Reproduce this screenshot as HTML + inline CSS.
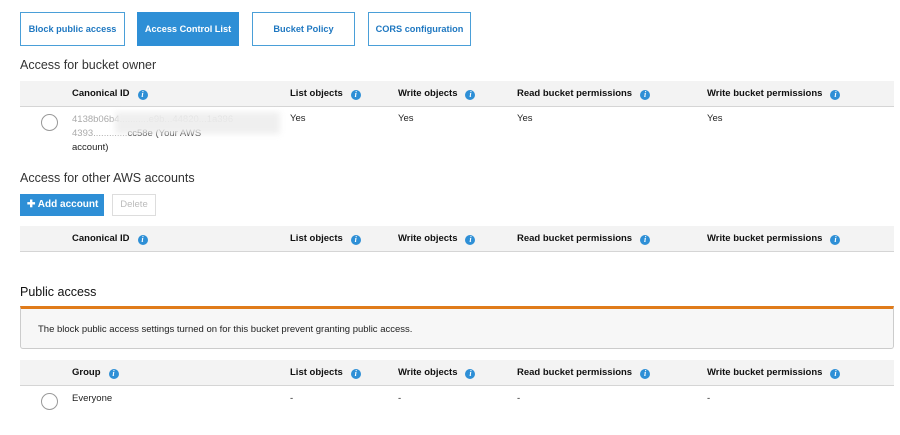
<!DOCTYPE html><html><head><style>
*{box-sizing:border-box;margin:0;padding:0}
body{width:900px;height:435px;background:#fff;font-family:"Liberation Sans",Arial,sans-serif;color:#222;position:relative;overflow:hidden}
.a{position:absolute}
.tab{position:absolute;top:12px;height:34px;border:1px solid #4a9fd8;color:#1f78c1;font-size:9.2px;font-weight:bold;display:flex;align-items:center;justify-content:center;background:#fff}
.tab.on{background:#2e8fd6;color:#fff;border-color:#2e8fd6}
h2{position:absolute;font-size:12.5px;font-weight:normal;color:#333;left:20px}
.hd{position:absolute;left:20px;width:874px;height:26px;background:#f3f3f3;border-bottom:1px solid #d5d5d5}
.hd span{position:absolute;top:7px;font-size:9.5px;font-weight:bold;color:#111;white-space:nowrap}
.i{display:inline-block;width:10px;height:10px;border-radius:50%;background:#2e8fd6;color:#fff;font-size:8px;line-height:10px;text-align:center;margin-left:8px;vertical-align:-1px;font-family:"Liberation Serif",serif;font-weight:bold}
.t{position:absolute;font-size:9.5px;color:#222}
.r{position:absolute;left:41px;width:17px;height:17px;border:1px solid #999;border-radius:50%}
</style></head><body>
<div class="tab" style="left:20px;width:105px">Block public access</div>
<div class="tab on" style="left:137px;width:102px">Access Control List</div>
<div class="tab" style="left:252px;width:103px">Bucket Policy</div>
<div class="tab" style="left:368px;width:103px">CORS configuration</div>

<h2 style="top:58px">Access for bucket owner</h2>
<div class="hd" style="top:81px"><span style="left:52px">Canonical ID<i class="i">i</i></span><span style="left:270px">List objects<i class="i">i</i></span><span style="left:378px">Write objects<i class="i">i</i></span><span style="left:497px">Read bucket permissions<i class="i">i</i></span><span style="left:687px">Write bucket permissions<i class="i">i</i></span></div>
<div class="r" style="top:114px"></div>
<div class="t" style="left:72px;top:113px;line-height:14px;width:210px"><span style="color:#aaa">4138b06b4...........e9b...44820...1a396</span><br><span style="color:#aaa">4393.............</span>cc58e (Your AWS<br>account)</div>
<div class="a" style="left:115px;top:112px;width:165px;height:22px;background:#eee;filter:blur(3px);opacity:.9"></div>
<div class="t" style="left:290px;top:113px">Yes</div>
<div class="t" style="left:398px;top:113px">Yes</div>
<div class="t" style="left:517px;top:113px">Yes</div>
<div class="t" style="left:707px;top:113px">Yes</div>

<h2 style="top:171px">Access for other AWS accounts</h2>
<div class="a" style="left:20px;top:194px;width:84px;height:22px;background:#2e8fd6;color:#fff;font-size:10px;font-weight:bold;line-height:22px;padding-left:7px">✚ Add account</div>
<div class="a" style="left:112px;top:194px;width:44px;height:22px;border:1px solid #ddd;color:#bbb;font-size:9.5px;line-height:20px;text-align:center">Delete</div>
<div class="hd" style="top:226px"><span style="left:52px">Canonical ID<i class="i">i</i></span><span style="left:270px">List objects<i class="i">i</i></span><span style="left:378px">Write objects<i class="i">i</i></span><span style="left:497px">Read bucket permissions<i class="i">i</i></span><span style="left:687px">Write bucket permissions<i class="i">i</i></span></div>

<h2 style="top:285px;color:#111">Public access</h2>
<div class="a" style="left:20px;top:306px;width:874px;height:43px;background:#f7f7f7;border:1px solid #ccc;border-top:3px solid #e07b1a;border-radius:0 0 3px 3px"></div>
<div class="t" style="left:38px;top:324px">The block public access settings turned on for this bucket prevent granting public access.</div>
<div class="hd" style="top:360px"><span style="left:52px">Group<i class="i">i</i></span><span style="left:270px">List objects<i class="i">i</i></span><span style="left:378px">Write objects<i class="i">i</i></span><span style="left:497px">Read bucket permissions<i class="i">i</i></span><span style="left:687px">Write bucket permissions<i class="i">i</i></span></div>
<div class="r" style="top:393px"></div>
<div class="t" style="left:72px;top:393px">Everyone</div>
<div class="t" style="left:290px;top:393px">-</div>
<div class="t" style="left:398px;top:393px">-</div>
<div class="t" style="left:517px;top:393px">-</div>
<div class="t" style="left:707px;top:393px">-</div>
</body></html>
